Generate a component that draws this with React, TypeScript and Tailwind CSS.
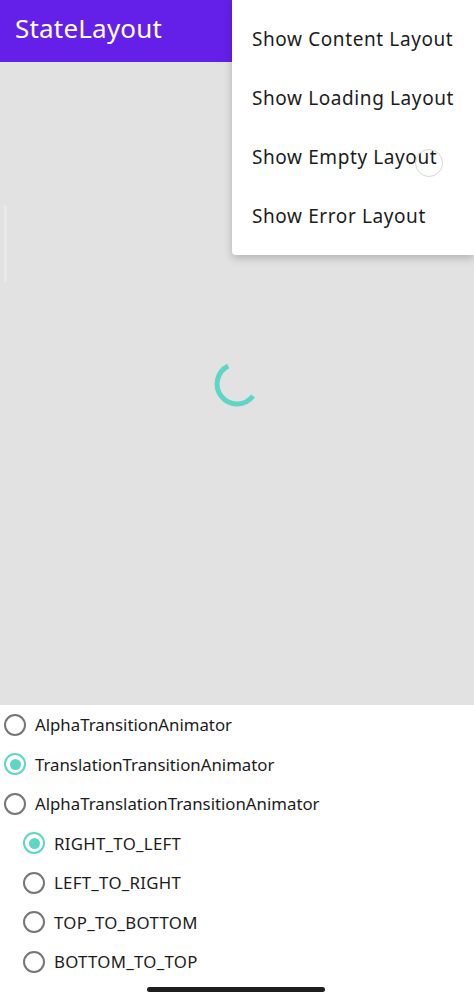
import React from "react";

const font = { fontFamily: '"Noto Sans", "Open Sans", sans-serif' };

function Radio({ checked }: { checked?: boolean }) {
  return checked ? (
    <span className="flex h-[22px] w-[22px] items-center justify-center rounded-full border-[2.5px] border-[#5fd5c6]">
      <span className="h-[11px] w-[11px] rounded-full bg-[#5fd5c6]" />
    </span>
  ) : (
    <span className="h-[22px] w-[22px] rounded-full border-[2.5px] border-[#767676]" />
  );
}

function Row({ label, checked, sub }: { label: string; checked?: boolean; sub?: boolean }) {
  return (
    <div className={`flex h-[39.5px] items-center ${sub ? "pl-[23px]" : "pl-[4px]"}`}>
      <Radio checked={checked} />
      <span className={`text-[16.8px] text-[#1c1c1c] ${sub ? "ml-[9px] tracking-[0.3px]" : "ml-[9px]"}`}>{label}</span>
    </div>
  );
}

export default function App() {
  const items = ["Show Content Layout", "Show Loading Layout", "Show Empty Layout", "Show Error Layout"];
  return (
    <div className="relative flex h-[998px] w-[474px] flex-col overflow-hidden bg-white" style={font}>
      <div className="flex h-[62px] items-center bg-[#6420e8] pb-[5px] pl-[15px]">
        <span className="text-[26px] tracking-[0.2px] text-white">StateLayout</span>
      </div>
      <div className="relative flex h-[643px] items-center justify-center bg-[#e2e2e2]">
        <div className="absolute left-[4px] top-[143px] h-[77px] w-[3px] bg-[#e9e9e9]" />
        <svg width="50" height="50" viewBox="0 0 50 50">
          <path d="M 41 37 A 20 20 0 1 1 16.2 7" fill="none" stroke="#5fd5c6" strokeWidth="5" />
        </svg>
      </div>
      <div className="flex flex-col">
        <Row label="AlphaTransitionAnimator" />
        <Row label="TranslationTransitionAnimator" checked />
        <Row label="AlphaTranslationTransitionAnimator" />
        <Row label="RIGHT_TO_LEFT" checked sub />
        <Row label="LEFT_TO_RIGHT" sub />
        <Row label="TOP_TO_BOTTOM" sub />
        <Row label="BOTTOM_TO_TOP" sub />
      </div>
      <div className="absolute bottom-[6px] left-[147px] h-[5px] w-[178px] rounded-full bg-[#1e1e1e]" />
      <div className="absolute right-0 top-0 w-[242px] rounded-bl-[4px] bg-white pb-[9px] pt-[10px] shadow-[0_3px_8px_rgba(0,0,0,0.22)]">
        {items.map((t) => (
          <div key={t} className="flex h-[59px] items-center pl-[20px] text-[19px] tracking-[0.6px] text-[#1c1c1c]">
            {t}
          </div>
        ))}
        <div className="absolute left-[183px] top-[149px] h-[28px] w-[28px] rounded-full border-[1.5px] border-[#d8d8d8]" />
      </div>
    </div>
  );
}
